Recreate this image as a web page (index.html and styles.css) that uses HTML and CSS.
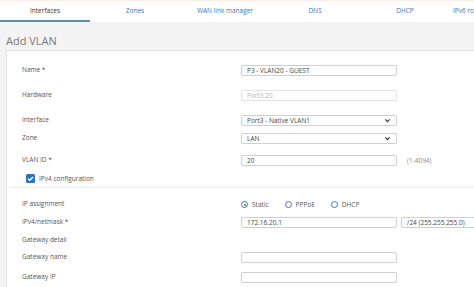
FILE: index.html
```html
<!DOCTYPE html>
<html lang="en">
<head>
  <meta charset="UTF-8">
  <title>Add VLAN</title>
  <link rel="stylesheet" href="styles.css">
</head>
<body>
  <nav class="tabs">
    <a class="tab active">Interfaces</a>
    <a class="tab">Zones</a>
    <a class="tab">WAN link manager</a>
    <a class="tab">DNS</a>
    <a class="tab">DHCP</a>
    <a class="tab last">IPv6 router advertisement</a>
  </nav>

  <h1 class="page-title">Add VLAN</h1>

  <div class="panel">
    <div class="row">
      <label class="label">Name *</label>
      <div class="field">P3 - VLAN20 - GUEST</div>
    </div>
    <div class="row gap-wide">
      <label class="label">Hardware</label>
      <div class="field disabled">Port3.20</div>
    </div>
    <div class="row gap-wide">
      <label class="label">Interface</label>
      <div class="field select">Port3 - Native VLAN1
        <svg class="chevron" viewBox="0 0 8 8"><path d="M1.5 2.8 L4 5.3 L6.5 2.8" /></svg>
      </div>
    </div>
    <div class="row gap-tight">
      <label class="label">Zone</label>
      <div class="field select">LAN
        <svg class="chevron" viewBox="0 0 8 8"><path d="M1.5 2.8 L4 5.3 L6.5 2.8" /></svg>
      </div>
    </div>
    <div class="row gap-mid">
      <label class="label">VLAN ID *</label>
      <div class="field">20</div>
      <span class="hint">(1-4094)</span>
    </div>

    <div class="check-row">
      <span class="checkbox">
        <svg viewBox="0 0 10 10"><path d="M2.3 5.2 L4.2 7 L7.8 3.2" /></svg>
      </span>
      <span>IPv4 configuration</span>
    </div>
    <div class="divider"></div>

    <div class="row gap-first">
      <label class="label">IP assignment</label>
      <div class="radios">
        <span class="radio checked"></span><span class="radio-text">Static</span>
        <span class="radio"></span><span class="radio-text">PPPoE</span>
        <span class="radio"></span><span class="radio-text">DHCP</span>
      </div>
    </div>
    <div class="row gap-tight">
      <label class="label">IPv4/netmask *</label>
      <div class="field">172.16.20.1</div>
      <div class="field mask">/24 (255.255.255.0)</div>
    </div>
    <div class="row gap-tight">
      <label class="label">Gateway detail</label>
    </div>
    <div class="row gap-small">
      <label class="label">Gateway name</label>
      <div class="field"></div>
    </div>
    <div class="row gap-nine">
      <label class="label">Gateway IP</label>
      <div class="field"></div>
    </div>
  </div>
</body>
</html>
```

FILE: styles.css
```css
body {
  margin: 0;
  font-family: 'Open Sans', 'Liberation Sans', sans-serif;
  font-size: 6.5px;
  color: #555;
  background-color: #f3f3f3;
  overflow: hidden;
  height: 287px;
}

.tabs {
  display: flex;
  height: 21px;
  background-color: #fff;
  border-top: 1px solid #fbeee6;
  white-space: nowrap;
  overflow: hidden;
}

.tab {
  flex: 0 0 90px;
  display: flex;
  align-items: center;
  justify-content: center;
  color: #3f74b8;
  box-sizing: border-box;
  border-bottom: 2px solid transparent;
}

.tab.last {
  flex: 0 0 auto;
  padding-left: 3px;
}

.tab.active {
  color: #333;
  border-bottom-color: #5a8fb0;
}

.page-title {
  margin: 0;
  padding: 10px 0 0 6px;
  height: 18px;
  font-size: 11px;
  font-weight: normal;
  color: #7a7a7a;
  line-height: 18px;
}

.panel {
  margin-left: 6px;
  background-color: #fff;
  border: 1px solid #e3e3e3;
  border-right: none;
  padding: 14px 0 20px 15px;
}

.row {
  display: flex;
  align-items: center;
  height: 11px;
}

.gap-wide { margin-top: 14px; }
.gap-mid { margin-top: 11px; }
.gap-nine { margin-top: 9px; }
.gap-tight { margin-top: 7px; }
.gap-small { margin-top: 6px; }
.gap-first { margin-top: 11px; }

.label {
  flex: 0 0 219px;
  margin-top: -2px;
}

.field {
  flex: 0 0 156px;
  height: 11px;
  box-sizing: border-box;
  border: 1px solid #cfcfcf;
  border-radius: 2px;
  padding: 0 5px;
  display: flex;
  align-items: center;
  color: #444;
}

.field.disabled {
  color: #b5b5b5;
  border-color: #e3e3e3;
}

.field.select {
  justify-content: space-between;
}

.chevron {
  width: 7px;
  height: 7px;
  fill: none;
  stroke: #333;
  stroke-width: 1.3;
}

.field.mask {
  flex: 0 0 90px;
  margin-left: 4px;
}

.hint {
  margin-left: 10px;
  color: #8a8a8a;
}

.check-row {
  display: flex;
  align-items: center;
  margin-top: 7px;
  margin-left: 4px;
  height: 10px;
}

.checkbox {
  width: 9px;
  height: 9px;
  border-radius: 1.5px;
  background-color: #2f6fc4;
  margin-right: 4px;
  display: flex;
}

.checkbox svg {
  width: 9px;
  height: 9px;
  fill: none;
  stroke: #fff;
  stroke-width: 1.6;
}

.divider {
  margin: 4px 0 0 -11px;
  border-top: 1px solid #ececec;
}

.radios {
  display: flex;
  align-items: center;
}

.radio {
  width: 7px;
  height: 7px;
  box-sizing: border-box;
  border: 1px solid #3f74b8;
  border-radius: 50%;
  margin-right: 4px;
  position: relative;
}

.radio.checked::after {
  content: '';
  position: absolute;
  left: 1.5px;
  top: 1.5px;
  width: 2px;
  height: 2px;
  border-radius: 50%;
  background-color: #3f74b8;
}

.radio-text {
  margin-right: 16px;
}
```
